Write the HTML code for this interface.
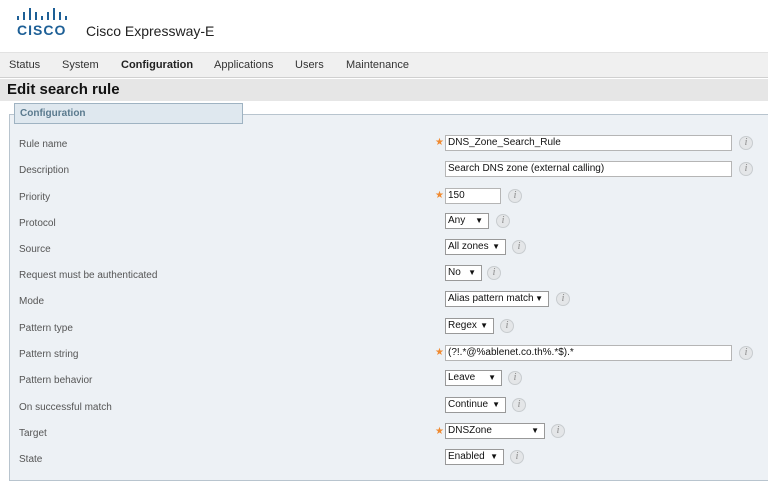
<!DOCTYPE html>
<html><head><meta charset="utf-8"><style>
*{margin:0;padding:0;box-sizing:border-box}
body{width:768px;height:491px;overflow:hidden;background:#fff;font-family:"Liberation Sans",Arial,sans-serif;position:relative}
.abs{position:absolute}
.nav{top:52px;left:0;width:768px;height:26px;background:#f0f0f0;border-top:1px solid #e2e2e2;border-bottom:1px solid #d0d0d0;font-size:11px;color:#333}
.nav span{position:absolute;top:6px}
.title{top:79px;left:0;width:768px;height:22px;background:#e6e6e6;font-size:15px;font-weight:bold;color:#111;padding:2px 0 0 7px}
.box{top:114px;left:9px;width:770px;height:367px;background:#edf1f5;border:1px solid #b8c4ce}
.tab{top:103px;left:14px;width:229px;height:21px;background:#dfe8ef;border:1px solid #9fb3c2;font-size:10px;font-weight:bold;color:#5a7a8e;padding:4px 0 0 5px}
.lbl{left:19px;font-size:10px;color:#555}
.inp{left:445px;height:16px;background:#fff;border:1px solid #b5b5b5;font-size:10px;color:#111;padding:0 0 0 2px;line-height:14px;white-space:nowrap}
.sel{left:445px;height:16px;background:#fff;border:1px solid #999;font-size:10px;color:#111;padding:0 0 0 2px;line-height:14px;white-space:nowrap}
.sel b{position:absolute;right:5px;top:0;font-size:8px;font-weight:normal}
.i{width:14px;height:14px;border-radius:50%;background:#e4e6e8;border:1px solid #c8cccf;font:italic 10px "Liberation Serif",serif;color:#888;text-align:center;line-height:12px}
.st{left:435px;color:#f08a30;font-size:10px}
</style></head><body>
<svg class="abs" style="left:17px;top:8px" width="54" height="13">
<g fill="#1d5f96">
<rect x="0" y="8" width="2" height="4"/><rect x="6" y="4" width="2" height="8"/><rect x="12" y="0" width="2" height="12"/><rect x="18" y="4" width="2" height="8"/><rect x="24" y="8" width="2" height="4"/><rect x="30" y="4" width="2" height="8"/><rect x="36" y="0" width="2" height="12"/><rect x="42" y="4" width="2" height="8"/><rect x="48" y="8" width="2" height="4"/>
</g></svg>
<div class="abs" style="left:17px;top:22px;font-size:14px;font-weight:bold;color:#1d5f96;letter-spacing:1px">CISCO</div>
<div class="abs" style="left:86px;top:23px;font-size:14px;color:#222">Cisco Expressway-E</div>
<div class="abs nav"><span style="left:9px">Status</span><span style="left:62px">System</span><span style="left:121px;font-weight:bold;color:#222">Configuration</span><span style="left:214px">Applications</span><span style="left:295px">Users</span><span style="left:346px">Maintenance</span></div>
<div class="abs title">Edit search rule</div>
<div class="abs box"></div>
<div class="abs tab">Configuration</div>

<div class="abs lbl" style="top:139px">Rule name</div>
<div class="abs st" style="top:137px">★</div>
<div class="abs inp" style="top:135px;width:287px">DNS_Zone_Search_Rule</div>
<div class="abs i" style="left:739px;top:136px">i</div>

<div class="abs lbl" style="top:165px">Description</div>
<div class="abs inp" style="top:161px;width:287px">Search DNS zone (external calling)</div>
<div class="abs i" style="left:739px;top:162px">i</div>

<div class="abs lbl" style="top:192px">Priority</div>
<div class="abs st" style="top:190px">★</div>
<div class="abs inp" style="top:188px;width:56px">150</div>
<div class="abs i" style="left:508px;top:189px">i</div>

<div class="abs lbl" style="top:218px">Protocol</div>
<div class="abs sel" style="top:213px;width:44px">Any<b>▼</b></div>
<div class="abs i" style="left:496px;top:214px">i</div>

<div class="abs lbl" style="top:244px">Source</div>
<div class="abs sel" style="top:239px;width:61px">All zones<b>▼</b></div>
<div class="abs i" style="left:512px;top:240px">i</div>

<div class="abs lbl" style="top:270px">Request must be authenticated</div>
<div class="abs sel" style="top:265px;width:37px">No<b>▼</b></div>
<div class="abs i" style="left:487px;top:266px">i</div>

<div class="abs lbl" style="top:296px">Mode</div>
<div class="abs sel" style="top:291px;width:104px">Alias pattern match<b>▼</b></div>
<div class="abs i" style="left:556px;top:292px">i</div>

<div class="abs lbl" style="top:323px">Pattern type</div>
<div class="abs sel" style="top:318px;width:49px">Regex<b>▼</b></div>
<div class="abs i" style="left:500px;top:319px">i</div>

<div class="abs lbl" style="top:349px">Pattern string</div>
<div class="abs st" style="top:347px">★</div>
<div class="abs inp" style="top:345px;width:287px">(?!.*@%ablenet.co.th%.*$).*</div>
<div class="abs i" style="left:739px;top:346px">i</div>

<div class="abs lbl" style="top:375px">Pattern behavior</div>
<div class="abs sel" style="top:370px;width:57px">Leave<b>▼</b></div>
<div class="abs i" style="left:508px;top:371px">i</div>

<div class="abs lbl" style="top:402px">On successful match</div>
<div class="abs sel" style="top:397px;width:61px">Continue<b>▼</b></div>
<div class="abs i" style="left:512px;top:398px">i</div>

<div class="abs lbl" style="top:428px">Target</div>
<div class="abs st" style="top:426px">★</div>
<div class="abs sel" style="top:423px;width:100px">DNSZone<b>▼</b></div>
<div class="abs i" style="left:551px;top:424px">i</div>

<div class="abs lbl" style="top:454px">State</div>
<div class="abs sel" style="top:449px;width:59px">Enabled<b>▼</b></div>
<div class="abs i" style="left:510px;top:450px">i</div>
</body></html>
